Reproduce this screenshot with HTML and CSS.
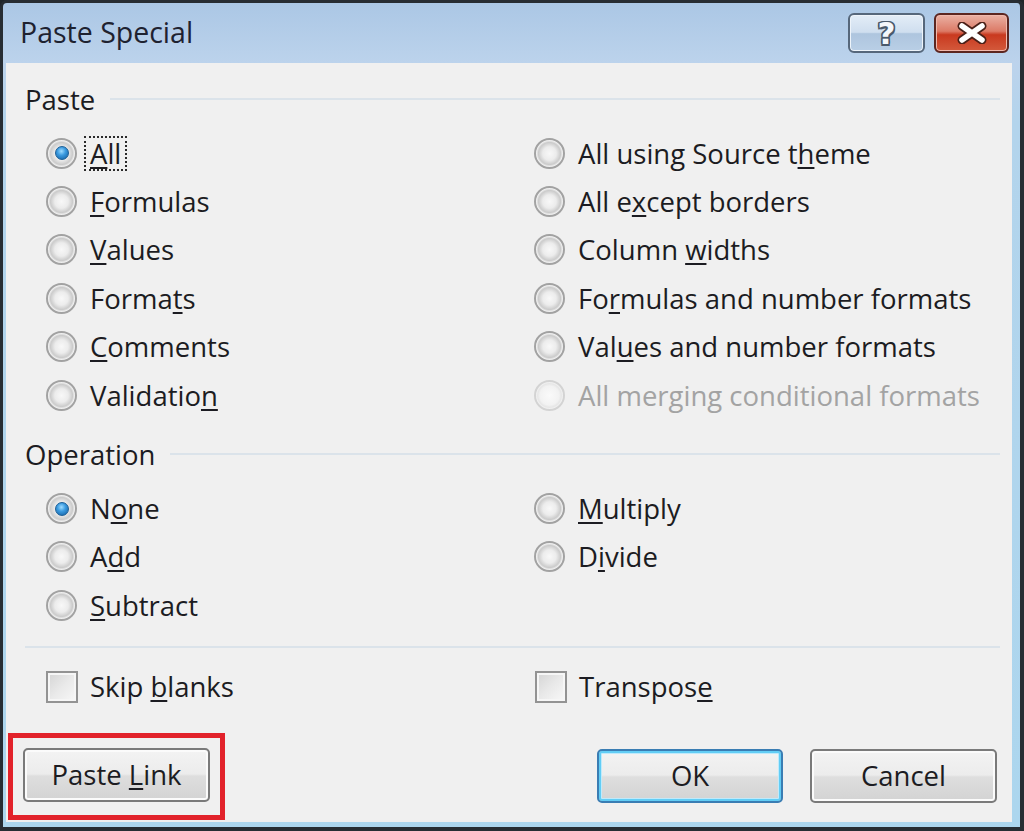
FILE: index.html
```html
<!DOCTYPE html>
<html lang="en">
<head>
<meta charset="utf-8">
<title>Paste Special</title>
<link rel="stylesheet" href="styles.css">
</head>
<body>
<div class="window">
  <div class="titlebar">
    <div class="title">Paste Special</div>
    <div class="tbtn help"><span class="qmark">?</span></div>
    <div class="tbtn close">
      <svg width="32" height="22" viewBox="0 0 32 22">
        <path d="M6 4 L26 18 M26 4 L6 18" stroke="#4a2018" stroke-width="9" stroke-linecap="round" fill="none"/>
        <path d="M6 4 L26 18 M26 4 L6 18" stroke="#ffffff" stroke-width="5.5" stroke-linecap="round" fill="none"/>
      </svg>
    </div>
  </div>
  <div class="client">
    <div class="ghead"><span class="gtext">Paste</span><span class="gline"></span></div>
    <div class="grid">
      <div class="opt"><span class="radio on"></span><span class="lbl focus"><u>A</u>ll</span></div>
      <div class="opt"><span class="radio"></span><span class="lbl">All using Source t<u>h</u>eme</span></div>
      <div class="opt"><span class="radio"></span><span class="lbl"><u>F</u>ormulas</span></div>
      <div class="opt"><span class="radio"></span><span class="lbl">All e<u>x</u>cept borders</span></div>
      <div class="opt"><span class="radio"></span><span class="lbl"><u>V</u>alues</span></div>
      <div class="opt"><span class="radio"></span><span class="lbl">Column <u>w</u>idths</span></div>
      <div class="opt"><span class="radio"></span><span class="lbl">Forma<u>t</u>s</span></div>
      <div class="opt"><span class="radio"></span><span class="lbl">Fo<u>r</u>mulas and number formats</span></div>
      <div class="opt"><span class="radio"></span><span class="lbl"><u>C</u>omments</span></div>
      <div class="opt"><span class="radio"></span><span class="lbl">Val<u>u</u>es and number formats</span></div>
      <div class="opt"><span class="radio"></span><span class="lbl">Validatio<u>n</u></span></div>
      <div class="opt"><span class="radio off"></span><span class="lbl dis">All merging conditional formats</span></div>
    </div>
    <div class="ghead op"><span class="gtext">Operation</span><span class="gline"></span></div>
    <div class="grid">
      <div class="opt"><span class="radio on"></span><span class="lbl">N<u>o</u>ne</span></div>
      <div class="opt"><span class="radio"></span><span class="lbl"><u>M</u>ultiply</span></div>
      <div class="opt"><span class="radio"></span><span class="lbl">A<u>d</u>d</span></div>
      <div class="opt"><span class="radio"></span><span class="lbl">D<u>i</u>vide</span></div>
      <div class="opt"><span class="radio"></span><span class="lbl"><u>S</u>ubtract</span></div>
    </div>
    <div class="sep"></div>
    <div class="checks">
      <div class="opt"><span class="cbox"></span><span class="lbl">Skip <u>b</u>lanks</span></div>
      <div class="opt"><span class="cbox"></span><span class="lbl">Transpos<u>e</u></span></div>
    </div>
    <div class="footer">
      <div class="hl"><div class="btn"><span>Paste <u>L</u>ink</span></div></div>
      <div class="spacer"></div>
      <div class="btn ok"><span>OK</span></div>
      <div class="btn cancel"><span>Cancel</span></div>
    </div>
  </div>
</div>
</body>
</html>
```
FILE: styles.css
```css
html, body {
  margin: 0;
  padding: 0;
  background: #1f2529;
}
body {
  font-family: "Open Sans", "Noto Sans", "DejaVu Sans", sans-serif;
  color: #1c1c22;
}
.window {
  width: 1024px;
  height: 831px;
  box-sizing: border-box;
  border: 3px solid #272d33;
  border-right-width: 4px;
  border-bottom-width: 4px;
  border-radius: 7px 7px 0 0;
  background: linear-gradient(to bottom, #abc7e5 0px, #bcd3ec 60px, #b3d4ec 120px, #acd6ee 100%);
  display: flex;
  flex-direction: column;
}
.titlebar {
  height: 60px;
  flex: none;
  display: flex;
  align-items: center;
  padding: 0 11px 0 17px;
}
.title {
  flex: 1;
  font-size: 28.5px;
  color: #1e2230;
  padding-bottom: 2px;
}
.tbtn {
  height: 40px;
  box-sizing: border-box;
  border-radius: 6px;
  display: flex;
  align-items: center;
  justify-content: center;
}
.help {
  width: 77px;
  border: 2px solid #56677b;
  background: linear-gradient(to bottom, #e3edf7 0%, #cfdeef 48%, #aec5de 52%, #b9cfe6 100%);
  box-shadow: inset 0 0 0 1px #eef4fa;
  margin-right: 9px;
}
.qmark {
  font-family: "DejaVu Sans", sans-serif;
  font-weight: bold;
  font-size: 31px;
  line-height: 32px;
  color: #f4f7fb;
  text-shadow: -1.5px -1.5px 0 #4a5a6c, 1.5px -1.5px 0 #4a5a6c, -1.5px 1.5px 0 #4a5a6c, 1.5px 1.5px 0 #4a5a6c, 0 1.5px 0 #4a5a6c, 0 -1.5px 0 #4a5a6c, 1.5px 0 0 #4a5a6c, -1.5px 0 0 #4a5a6c;
}
.close {
  width: 75px;
  border: 2px solid #5c2620;
  background: linear-gradient(to bottom, #eab1a4 0%, #dc7a66 45%, #c9391f 55%, #d35a3c 100%);
  box-shadow: inset 0 0 0 1px #f0b9ad;
}
.close svg {
  display: block;
}
.client {
  flex: 1;
  margin: 0 8px 5px 3px;
  background: #f0f0f0;
  padding-top: 19px;
  display: flex;
  flex-direction: column;
}
.ghead {
  display: flex;
  align-items: center;
  gap: 15px;
  height: 36px;
  margin: 0 12px 0 19px;
  flex: none;
}
.ghead.op {
  margin-top: 18px;
}
.gtext {
  font-size: 27.5px;
  line-height: 36px;
}
.gline {
  flex: 1;
  height: 2px;
  background: #dbe3ea;
  margin-top: -3px;
}
.grid {
  display: grid;
  grid-template-columns: 488px 1fr;
  grid-auto-rows: 48.4px;
  margin: 11px 0 0 40px;
  flex: none;
}
.opt {
  display: flex;
  align-items: center;
  gap: 7px;
}
.lbl {
  font-size: 27.5px;
  line-height: 31px;
  padding: 0 4px;
  border: 2px dotted transparent;
  white-space: nowrap;
}
.lbl.focus {
  border-color: #2a2a2a;
}
.lbl.dis {
  color: #a3a3a3;
}
u {
  text-decoration-thickness: 2px;
  text-underline-offset: 3px;
}
.radio {
  width: 31px;
  height: 31px;
  flex: none;
  box-sizing: border-box;
  border-radius: 50%;
  border: 2px solid #a2a2a2;
  background: radial-gradient(circle at 50% 50%, #f8f8f8 0%, #ececec 35%, #cbcbcb 58%, #f7f7f7 70%, #fbfbfb 100%);
  display: flex;
  align-items: center;
  justify-content: center;
}
.radio.on::after {
  content: "";
  width: 14px;
  height: 14px;
  border-radius: 50%;
  box-sizing: border-box;
  border: 1px solid #1b5e96;
  background: radial-gradient(circle at 45% 35%, #9fdcff 0%, #3b9be0 40%, #0f5a9c 100%);
}
.radio.off {
  border-color: #d3d3d3;
  background: radial-gradient(circle at 50% 50%, #fafafa 0%, #f2f2f2 50%, #e6e6e6 62%, #fafafa 75%);
}
.sep {
  height: 2px;
  background: #dbe3ea;
  margin: 16px 12px 0 19px;
  flex: none;
}
.checks {
  display: grid;
  grid-template-columns: 488px 1fr;
  height: 40px;
  margin: 19px 0 0 40px;
  flex: none;
}
.checks .opt {
  gap: 6px;
}
.checks .opt + .opt .cbox {
  margin-left: 1px;
}
.cbox {
  width: 32px;
  height: 32px;
  flex: none;
  box-sizing: border-box;
  border: 2px solid #939393;
  background: linear-gradient(135deg, #d4d4d4 0%, #e9e9e9 50%, #f8f8f8 100%);
  box-shadow: inset 0 0 0 2px #f6f6f6;
}
.footer {
  display: flex;
  align-items: flex-start;
  margin-top: 26px;
  padding: 0 15px 0 2px;
  flex: none;
}
.hl {
  border: 5px solid #e2222b;
  padding: 10px 10px 13px 10px;
}
.spacer {
  flex: 1;
}
.btn {
  width: 187px;
  height: 54px;
  box-sizing: border-box;
  border: 2px solid #7a7a7a;
  border-radius: 5px;
  background: linear-gradient(to bottom, #f3f3f3 0%, #ececec 48%, #dedede 52%, #d3d3d3 100%);
  box-shadow: inset 0 0 0 2px #fbfbfb;
  font-size: 27.5px;
  display: flex;
  align-items: center;
  justify-content: center;
  color: #1c1c22;
  white-space: nowrap;
}
.btn.ok {
  width: 186px;
  margin-top: 16px;
  border-color: #3a7db3;
  box-shadow: inset 0 0 0 2px #62cdf5, inset 0 0 0 3px #bfeafb;
}
.btn.cancel {
  margin-top: 16px;
  margin-left: 27px;
}
```
